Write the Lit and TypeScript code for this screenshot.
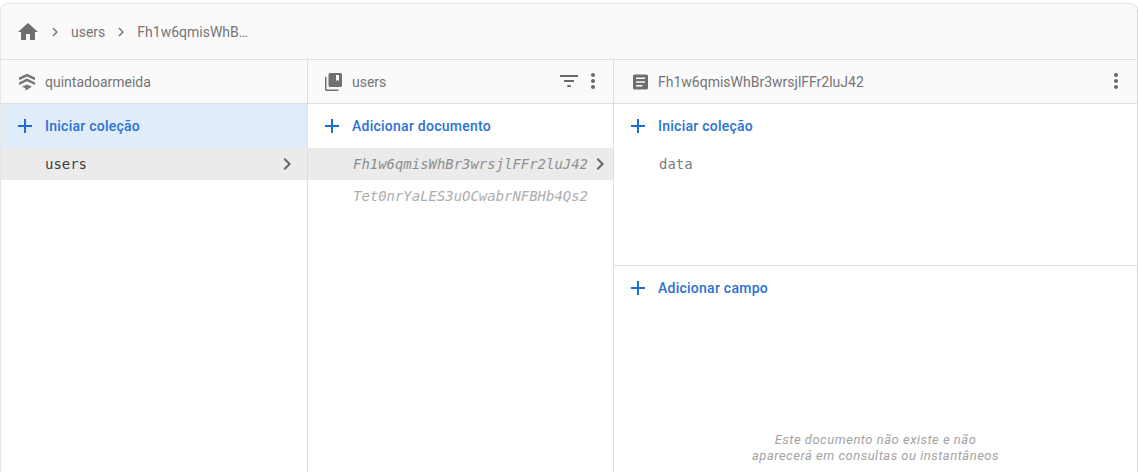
import { LitElement, html, css } from "lit";
import { customElement } from "lit/decorators.js";

const plus = html`<svg class="plus" width="24" height="24" viewBox="0 0 24 24"><path d="M19 13h-6v6h-2v-6H5v-2h6V5h2v6h6v2z" fill="#1a6fd6"/></svg>`;
const chevron = html`<svg class="chev" width="24" height="24" viewBox="0 0 24 24"><path d="M10 6L8.590 7.410 13.170 12l-4.580 4.590L10 18l6-6z" fill="#666"/></svg>`;
const dots = html`<svg width="24" height="24" viewBox="0 1 24 24"><path d="M12 8c1.100 0 2-.9 2-2s-.9-2-2-2-2 .9-2 2 .9 2 2 2zm0 2c-1.100 0-2 .9-2 2s.9 2 2 2 2-.9 2-2-.9-2-2-2zm0 6c-1.100 0-2 .9-2 2s.9 2 2 2 2-.9 2-2-.9-2-2-2z" fill="#6a6a6a"/></svg>`;
const sep = html`<svg class="sep" width="18" height="18" viewBox="0 0 24 24"><path d="M10 6L8.590 7.410 13.170 12l-4.580 4.590L10 18l6-6z" fill="#7a7a7a"/></svg>`;

@customElement("app-root")
export class AppRoot extends LitElement {
  static styles = css`
    :host { display: block; width: 1138px; height: 472px; overflow: hidden; background: #fff; font-family: Roboto, sans-serif; font-size: 14px; color: #616161; }
    .panel { box-sizing: border-box; height: 469px; margin-top: 3px; border: 1px solid #e6e6e6; border-right-color: #d8d8d8; border-bottom: 0; border-radius: 8px 8px 0 0; display: flex; flex-direction: column; overflow: hidden; }
    .crumbs { height: 56px; flex: none; box-sizing: border-box; background: #fafafa; border-bottom: 1px solid #dedede; display: flex; align-items: center; padding-left: 15px; }
    .home { margin-right: 6px; }
    .sep { margin-right: 7px; }
    .crumb { margin-right: 7px; color: #757575; }
    .cols { flex: 1; display: grid; grid-template-columns: 307px 306px 1fr; min-height: 0; }
    .col { display: flex; flex-direction: column; border-right: 1px solid #dedede; min-width: 0; }
    .col:last-child { border-right: 0; }
    .head { height: 44px; flex: none; box-sizing: border-box; background: #fafafa; border-bottom: 1px solid #dedede; display: flex; align-items: center; color: #757575; }
    .head .ic { width: 20px; height: 20px; margin: 0 8px 0 16px; flex: none; }
    .head .t { flex: 1; }
    .head .acts { display: flex; align-items: center; }
    .act { height: 44px; flex: none; display: flex; align-items: center; padding-left: 12px; gap: 8px; color: #2a72d5; font-weight: 500; letter-spacing: .25px; }
    .act.sel { background: #e1ecf9; }
    .row { height: 32px; flex: none; display: flex; align-items: center; padding-left: 44px; font-family: "DejaVu Sans Mono", monospace; font-size: 13.95px; color: #3c3c3c; justify-content: space-between; }
    .row.on { background: #ebebeb; }
    .doc { font-style: italic; color: #adadad; }
    .doc.on { color: #8e8e8e; }
    .row.doc { padding-left: 45px; }
    .row .chev { margin-right: 8px; flex: none; }
    .row.doc .chev { margin-right: 2px; }
    .sub { color: #7a7a7a; padding-left: 45px; }
    .top { height: 162px; flex: none; box-sizing: border-box; border-bottom: 1px solid #e0e0e0; }
    .bottom { flex: 1; display: flex; flex-direction: column; min-height: 0; }
    .note { margin-top: auto; padding-bottom: 8px; text-align: center; font-style: italic; font-size: 13px; line-height: 16px; color: #a3a3a3; letter-spacing: .5px; }
    .col2 .acts { margin-right: 8px; }
    .col3 .acts { margin-right: 9px; }
  `;

  render() {
    return html`<div class="panel">
      <div class="crumbs">
        <svg class="home" width="24" height="24" viewBox="0 0 24 24"><path d="M10 20v-6h4v6h5v-8h3L12 3 2 12h3v8z" fill="#6e6e6e"/></svg>
        ${sep}<span class="crumb">users</span>${sep}<span class="crumb">Fh1w6qmisWhB…</span>
      </div>
      <div class="cols">
        <div class="col">
          <div class="head">
            <svg class="ic" viewBox="0 0 20 20"><path d="M2 5.600L10 1.800l8 3.800V8.200L10 4.400 2 8.200zM2 10.400L10 6.600l8 3.800v2.600L10 9.200 2 13zM5 14.800l5-2.300 5 2.300-6.500 3.700-.3-2.500z" fill="#757575"/></svg>
            <span class="t">quintadoarmeida</span>
          </div>
          <div class="act sel">${plus}<span>Iniciar coleção</span></div>
          <div class="row on"><span>users</span>${chevron}</div>
        </div>
        <div class="col col2">
          <div class="head">
            <svg class="ic" viewBox="0 0 20 20"><path d="M1 5h1.500v12.500h12V19H2.500A1.500 1.500 0 0 1 1 17.500z" fill="#707070"/><path fill-rule="evenodd" d="M6 1h10.500A1.500 1.500 0 0 1 18 2.500v11a1.500 1.500 0 0 1-1.500 1.500H6a1.500 1.500 0 0 1-1.500-1.500v-11A1.500 1.500 0 0 1 6 1zM12 3v6l1.500-1 1.500 1V3z" fill="#707070"/></svg>
            <span class="t">users</span>
            <span class="acts">
              <svg width="24" height="24" viewBox="0 0 24 24"><path d="M3 5h18v2H3zM7 10h10v2H7zM10.300 15h3.400v2h-3.400z" fill="#6a6a6a"/></svg>
              ${dots}
            </span>
          </div>
          <div class="act">${plus}<span>Adicionar documento</span></div>
          <div class="row doc on"><span>Fh1w6qmisWhBr3wrsjlFFr2luJ42</span>${chevron}</div>
          <div class="row doc"><span>Tet0nrYaLES3uOCwabrNFBHb4Qs2</span></div>
        </div>
        <div class="col col3">
          <div class="head">
            <svg class="ic" viewBox="0 0 20 20"><path fill-rule="evenodd" d="M4.500 2.500h12A1.500 1.500 0 0 1 18 4v12a1.500 1.500 0 0 1-1.500 1.500h-12A1.500 1.500 0 0 1 3 16V4a1.500 1.500 0 0 1 1.500-1.500zM6 5.500V7h9V5.500zM6 9.300v1.500h9V9.300zM6 13v1.500h6.500V13z" fill="#6e6e6e"/></svg>
            <span class="t">Fh1w6qmisWhBr3wrsjlFFr2luJ42</span>
            <span class="acts">${dots}</span>
          </div>
          <div class="top">
            <div class="act">${plus}<span>Iniciar coleção</span></div>
            <div class="row sub"><span>data</span></div>
          </div>
          <div class="bottom">
            <div class="act">${plus}<span>Adicionar campo</span></div>
            <div class="note">Este documento não existe e não<br>aparecerá em consultas ou instantâneos</div>
          </div>
        </div>
      </div>
    </div>`;
  }
}
